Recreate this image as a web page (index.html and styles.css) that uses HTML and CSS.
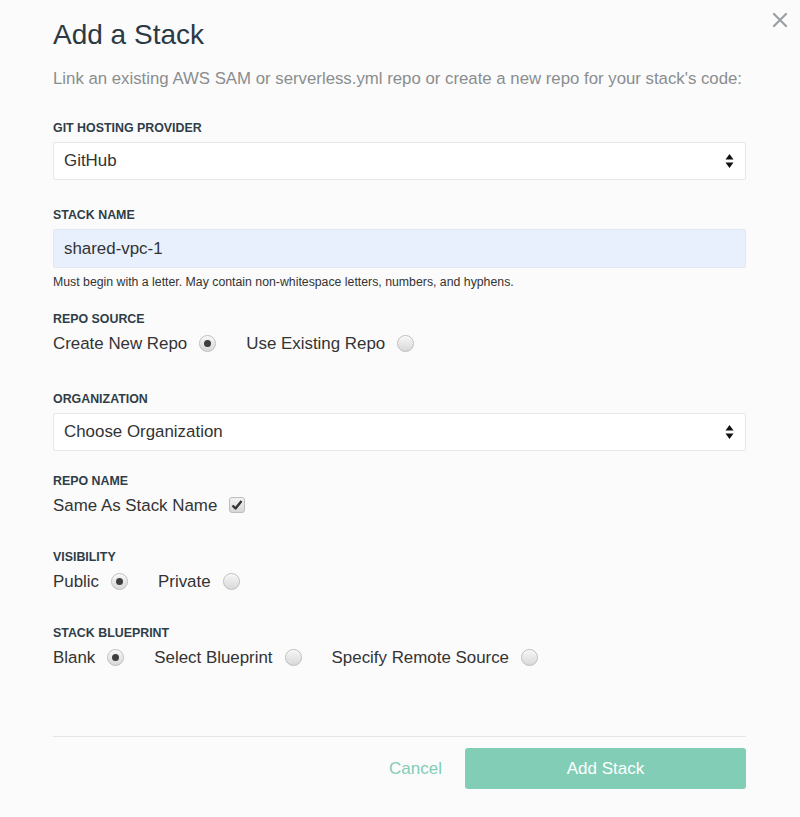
FILE: index.html
```html
<!DOCTYPE html>
<html>
<head>
    <meta charset="utf-8">
    <title>Add a Stack</title>
    <link rel="stylesheet" href="styles.css">
</head>
<body>
<div class="modal">
    <a class="close" href="#" title="Close">
        <svg width="16" height="16" viewBox="0 0 16 16"><path d="M2 2 L14 14 M14 2 L2 14" stroke="#9aa0a4" stroke-width="2.2" stroke-linecap="round"/></svg>
    </a>

    <h1 class="title">Add a Stack</h1>
    <div class="explain">Link an existing AWS SAM or serverless.yml repo or create a new repo for your stack's code:</div>

    <div class="field">
        <div class="label">Git Hosting Provider</div>
        <div class="select">
            <span>GitHub</span>
            <svg class="arrows" width="9" height="16" viewBox="0 0 9 16"><path d="M4.5 1 L8.5 6.5 L0.5 6.5 Z M0.5 9.5 L8.5 9.5 L4.5 15 Z" fill="#111"/></svg>
        </div>
    </div>

    <div class="field stack-name">
        <div class="label">Stack Name</div>
        <div class="input filled">shared-vpc-1</div>
        <div class="help">Must begin with a letter. May contain non-whitespace letters, numbers, and hyphens.</div>
    </div>

    <div class="field options-field repo-source">
        <div class="label">Repo Source</div>
        <div class="options">
            <span class="option">Create New Repo <i class="radio checked"></i></span>
            <span class="option">Use Existing Repo <i class="radio"></i></span>
        </div>
    </div>

    <div class="field organization">
        <div class="label">Organization</div>
        <div class="select">
            <span>Choose Organization</span>
            <svg class="arrows" width="9" height="16" viewBox="0 0 9 16"><path d="M4.5 1 L8.5 6.5 L0.5 6.5 Z M0.5 9.5 L8.5 9.5 L4.5 15 Z" fill="#111"/></svg>
        </div>
    </div>

    <div class="field options-field repo-name">
        <div class="label">Repo Name</div>
        <div class="options">
            <span class="option">Same As Stack Name <i class="checkbox"><svg width="12" height="12" viewBox="0 0 12 12"><path d="M1.5 6.5 L4.5 9.5 L10.5 2" stroke="#333" stroke-width="2.4" fill="none" stroke-linejoin="round"/></svg></i></span>
        </div>
    </div>

    <div class="field options-field">
        <div class="label">Visibility</div>
        <div class="options">
            <span class="option">Public <i class="radio checked"></i></span>
            <span class="option">Private <i class="radio"></i></span>
        </div>
    </div>

    <div class="field options-field">
        <div class="label">Stack Blueprint</div>
        <div class="options">
            <span class="option">Blank <i class="radio checked"></i></span>
            <span class="option">Select Blueprint <i class="radio"></i></span>
            <span class="option">Specify Remote Source <i class="radio"></i></span>
        </div>
    </div>

    <div class="footer">
        <a class="cancel" href="#">Cancel</a>
        <button class="submit">Add Stack</button>
    </div>
</div>
</body>
</html>
```

FILE: styles.css
```css
body {
    font-family: "Helvetica Neue", Helvetica, "Liberation Sans", Arial, sans-serif;
    color: #333;
    background-color: #fbfbfb;
    margin: 0;
    padding: 0;
}

.modal {
    position: relative;
    width: 693px;
    padding: 18px 54px 28px 53px;
}

.close {
    position: absolute;
    top: 12px;
    right: 12px;
    display: block;
    line-height: 0;
}

.title {
    margin: 0;
    font-size: 28px;
    line-height: 34px;
    font-weight: normal;
    color: #2b3a45;
}

.explain {
    margin-top: 17px;
    font-size: 16.8px;
    line-height: 20px;
    white-space: nowrap;
    color: #8a8d8f;
    margin-bottom: 31px;
}

.label {
    font-size: 12.4px;
    line-height: 16px;
    font-weight: bold;
    text-transform: uppercase;
    color: #2f3d48;
    margin-bottom: 6px;
}

.select, .input {
    box-sizing: border-box;
    height: 38px;
    padding: 0 10px;
    font-size: 16.9px;
    line-height: 36px;
    color: #333;
    background: #fff;
    border: 1px solid #e5e7e8;
    border-radius: 2px;
}

.select {
    display: flex;
    justify-content: space-between;
    align-items: center;
    padding-right: 11px;
}

.input.filled {
    height: 39px;
    line-height: 37px;
    background: #e8f0fd;
    border-color: #e3e9f2;
}

.help {
    margin-top: 6px;
    font-size: 12.3px;
    line-height: 16px;
    color: #333;
}

.stack-name {
    margin-top: 27px;
}

.organization {
    margin-top: 37px;
}

.options-field {
    margin-top: 33px;
}

.options-field.repo-name {
    margin-top: 22px;
}

.options-field.repo-source {
    margin-top: 21px;
}

.options-field .label {
    margin-bottom: 7px;
}

.options {
    display: flex;
    gap: 30px;
    font-size: 16.9px;
    line-height: 20px;
    color: #333;
}

.option {
    display: flex;
    align-items: center;
    gap: 12px;
}

.radio {
    display: inline-block;
    box-sizing: border-box;
    width: 17px;
    height: 17px;
    border-radius: 50%;
    border: 1px solid #bdbdbd;
    background: linear-gradient(#f6f6f6, #d9d9d9);
    box-shadow: inset 0 1px 1px rgba(255, 255, 255, 0.8);
    position: relative;
    top: -1px;
}

.radio.checked::after {
    content: "";
    position: absolute;
    left: 4px;
    top: 4px;
    width: 7px;
    height: 7px;
    border-radius: 50%;
    background: #3e3e3e;
}

.checkbox {
    display: inline-flex;
    align-items: center;
    justify-content: center;
    box-sizing: border-box;
    width: 16px;
    height: 16px;
    border-radius: 3px;
    border: 1px solid #bdbdbd;
    background: linear-gradient(#f3f3f3, #d6d6d6);
    position: relative;
    top: -1px;
}

.footer {
    margin-top: 68px;
    border-top: 1px solid #e6e6e6;
    padding-top: 11px;
    display: flex;
    justify-content: flex-end;
    align-items: center;
    gap: 23px;
}

.cancel {
    text-decoration: none;
    color: #82cdb5;
    font-size: 17px;
}

.submit {
    width: 281px;
    height: 41px;
    border: none;
    border-radius: 3px;
    background: #82cdb5;
    color: #fff;
    font-family: inherit;
    font-size: 17px;
}
```
